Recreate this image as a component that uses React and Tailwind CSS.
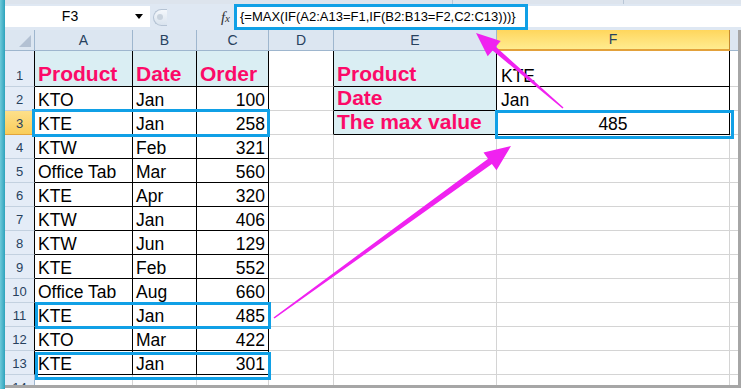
import React from "react";

const rows = [
    ["KTO", "Jan", 100],
    ["KTE", "Jan", 258],
    ["KTW", "Feb", 321],
    ["Office Tab", "Mar", 560],
    ["KTE", "Apr", 320],
    ["KTW", "Jan", 406],
    ["KTW", "Jun", 129],
    ["KTE", "Feb", 552],
    ["Office Tab", "Aug", 660],
    ["KTE", "Jan", 485],
    ["KTO", "Mar", 422],
    ["KTE", "Jan", 301],
];

const lookup = [
    ["Product", "KTE"],
    ["Date", "Jan"],
    ["The max value", "485"],
];

const cols = ["A", "B", "C", "D", "E", "F"];

function borderFor(r, col) {
    if (r === 14) return "border-r border-[#d4d4d4]";
    if (["A", "B", "C"].includes(col)) return "border-r border-b border-black";
    if (["E", "F"].includes(col) && r <= 3) return "border-r border-b border-black";
    if (col === "D" && r <= 3) return "border-r border-b border-r-black border-b-[#d4d4d4]";
    return "border-r border-b border-[#d4d4d4]";
}

function fillFor(r, col) {
    if (r === 1 && ["A", "B", "C"].includes(col)) return "bg-[#daeef3]";
    if (col === "E" && r <= 3) return "bg-[#daeef3]";
    return "bg-white";
}

function cellContent(r, col) {
    const pink = "font-bold text-[21px] leading-[24px] text-[#fc0a68] pl-[3px]";
    const plain = "text-[17.5px] leading-[20px] text-black";
    if (r === 1) {
        if (col === "A") return <span className={pink}>Product</span>;
        if (col === "B") return <span className={pink}>Date</span>;
        if (col === "C") return <span className={pink}>Order</span>;
    }
    if (r >= 2 && r <= 13) {
        const row = rows[r - 2];
        if (col === "A") return <span className={plain + " pl-[3px]"}>{row[0]}</span>;
        if (col === "B") return <span className={plain + " pl-[3px]"}>{row[1]}</span>;
        if (col === "C") return <span className={plain + " ml-auto pr-[3px]"}>{row[2]}</span>;
    }
    if (r <= 3) {
        if (col === "E") return <span className={pink + " whitespace-nowrap"}>{lookup[r - 1][0]}</span>;
        if (col === "F" && r < 3) return <span className={plain + " pl-[4px]"}>{lookup[r - 1][1]}</span>;
        if (col === "F") return <span className={plain + " mx-auto"}>{lookup[r - 1][1]}</span>;
    }
    return null;
}

function Highlight({ className }) {
    return <div className={"absolute border-[3px] border-[#10a0e6] pointer-events-none " + className} />;
}

export default function App() {
    const rowNums = Array.from({ length: 14 }, (_, i) => i + 1);

    return (
        <div className="relative w-[741px] h-[389px] overflow-hidden flex bg-white font-['Liberation_Sans',Arial,sans-serif]">
            {/* window edge */}
            <div className="w-[5px] h-full bg-linear-to-r from-[#6cc9da] to-[#2aa3bc]" />

            <div className="flex-1 flex flex-col">
                {/* ribbon edge */}
                <div className="h-[5px] bg-[#dde4ed] border-b border-[#a9b9cc] flex">
                    <div className="w-[448px] border-r border-[#b9c6d6]" />
                    <div className="w-[171px] border-r border-[#b9c6d6]" />
                </div>

                {/* formula bar */}
                <div className="h-[26px] flex items-start bg-[#dfe8f3] -mt-px">
                    <div className="w-[145px] h-[21px] mt-[2px] bg-white flex items-center">
                        <span className="w-[130px] text-center text-[14px] text-black">F3</span>
                        <span className="w-0 h-0 border-l-[4px] border-r-[4px] border-t-[5px] border-l-transparent border-r-transparent border-t-black" />
                    </div>
                    <div className="w-[84px] h-[26px] flex items-center">
                        <div className="ml-[3px] w-[14px] h-[17px] rounded-l-full border border-r-0 border-[#b5c3d4] bg-linear-to-b from-[#f4f7fb] to-[#d9e3ee] flex items-center pl-[3px]">
                            <div className="w-[6px] h-[6px] rounded-full bg-[#c9d3de]" />
                        </div>
                        <span className="ml-auto mr-[4px] font-['Liberation_Serif',serif] italic text-[15px] text-[#333]">
                            f<span className="text-[11px]">x</span>
                        </span>
                    </div>
                    <div className="w-[294px] h-[26px] border-[3px] border-[#10a0e6] bg-white flex items-center pl-[3px]">
                        <span className="text-[13px] text-black whitespace-nowrap">
                            {"{=MAX(IF(A2:A13=F1,IF(B2:B13=F2,C2:C13)))}"}
                        </span>
                    </div>
                    <div className="flex-1 h-[21px] mt-[2px] bg-white" />
                </div>

                {/* sheet grid */}
                <div className="border-r-[3px] border-b-[3px] border-[#a6a6a6]">
                    <div className="grid grid-cols-[30px_98px_64px_72px_65px_163px_233px_8px] grid-rows-[21px_36px_repeat(12,24px)_10px] overflow-hidden">
                        {/* header row */}
                        <div className="bg-[#dce6f1] border-r border-b border-[#9eb6ce] flex items-end justify-end p-[3px]">
                            <svg width="12" height="12" viewBox="0 0 12 12">
                                <polygon points="12,0 12,12 0,12" fill="#b3c1d3" />
                            </svg>
                        </div>
                        {cols.map((c) =>
                            c === "F" ? (
                                <div
                                    key={c}
                                    className="bg-linear-to-b from-[#ffd65c] to-[#ffec8f] border-r border-b-2 border-r-[#c48a2e] border-b-[#e3a13a] flex items-center justify-center text-[14px] text-[#27415e]"
                                >
                                    {c}
                                </div>
                            ) : (
                                <div
                                    key={c}
                                    className="bg-[#dce6f1] border-r border-b border-[#9eb6ce] flex items-center justify-center text-[14px] text-[#27415e]"
                                >
                                    {c}
                                </div>
                            )
                        )}
                        <div className="bg-[#dce6f1] border-b border-[#9eb6ce]" />

                        {/* body rows */}
                        {rowNums.map((r) => (
                            <React.Fragment key={r}>
                                {r === 3 ? (
                                    <div className="bg-linear-to-b from-[#fde08a] to-[#f9cd5a] border-r border-b border-r-black border-b-[#e2a43c] flex items-end justify-center text-[13px] leading-[20px] text-[#27415e]">
                                        {r}
                                    </div>
                                ) : r === 14 ? (
                                    <div className="bg-[#e4ecf7] border-r border-[#9eb6ce] overflow-hidden flex justify-center">
                                        <span className="pt-[6px] text-[13px] leading-[13px] text-[#27415e]">{r}</span>
                                    </div>
                                ) : (
                                    <div className="bg-[#e4ecf7] border-r border-b border-r-black border-b-[#c3d1e0] flex items-end justify-center text-[13px] leading-[20px] text-[#27415e]">
                                        {r}
                                    </div>
                                )}
                                {cols.map((c) => (
                                    <div
                                        key={c}
                                        className={"flex items-end overflow-visible " + borderFor(r, c) + " " + fillFor(r, c)}
                                    >
                                        {cellContent(r, c)}
                                    </div>
                                ))}
                                <div className={r === 14 ? "bg-white" : "bg-white border-b border-[#d4d4d4]"} />
                            </React.Fragment>
                        ))}
                    </div>
                </div>
            </div>

            {/* selection highlights */}
            <Highlight className="left-[32px] top-[109px] w-[238px] h-[28px]" />
            <Highlight className="left-[35px] top-[302px] w-[236px] h-[27px]" />
            <Highlight className="left-[35px] top-[352px] w-[236px] h-[28px]" />
            <Highlight className="left-[495px] top-[110px] w-[239px] h-[29px]" />

            {/* arrows */}
            <svg className="absolute inset-0 pointer-events-none" width="741" height="389" viewBox="0 0 741 389">
                <polygon
                    fill="#f022f0"
                    points="476,33 500.7,41.1 495.8,46.8 563.5,107.5 562.5,108.5 492.6,50.6 487.7,56.3"
                />
                <polygon
                    fill="#f022f0"
                    points="511,146 496.5,170.2 491.9,163.9 274.5,318.6 273.5,317.4 488.1,158.7 483.5,152.4"
                />
            </svg>
        </div>
    );
}
